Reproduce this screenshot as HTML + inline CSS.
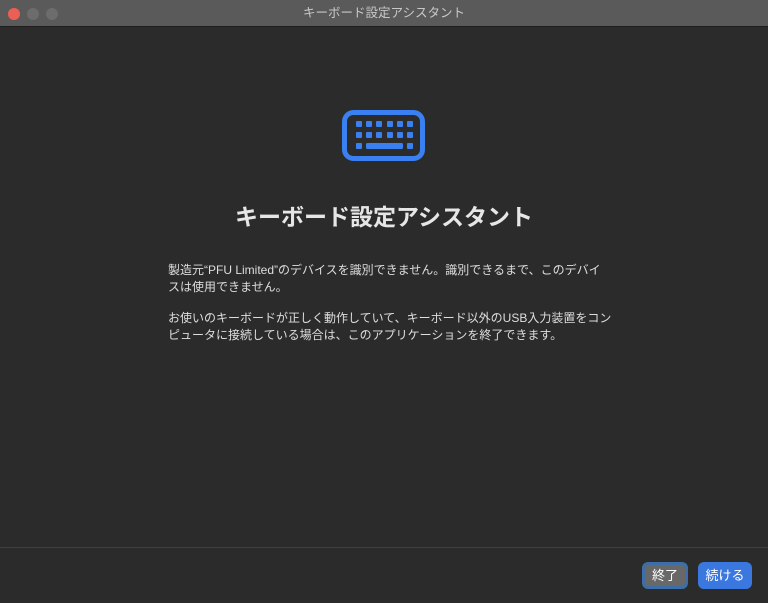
<!DOCTYPE html>
<html><head><meta charset="utf-8"><style>
*{margin:0;padding:0;box-sizing:border-box}
body{width:768px;height:603px;background:#2b2b2b;font-family:"Liberation Sans","Noto Sans CJK JP",sans-serif;overflow:hidden;position:relative;color:#ddd}
.tb{position:absolute;left:0;top:0;width:768px;height:27px;background:#5a5a5a;border-bottom:1px solid #1e1e1e;text-align:center;font-size:12.5px;line-height:26px;color:#c8c8c8}
.d{position:absolute;top:8px;width:12px;height:12px;border-radius:50%;background:#6c6c6c}
h1{position:absolute;top:198px;left:0;width:768px;text-align:center;font-size:23px;font-weight:bold;color:#e6e6e6}
p{position:absolute;left:168px;width:500px;white-space:nowrap;font-size:12px;line-height:17px;color:#dedede}
.sep{position:absolute;left:0;top:547px;width:768px;height:1px;background:#3f3f3f}
.b{position:absolute;top:562px;height:27px;border-radius:6px;font-size:13px;line-height:27px;text-align:center;color:#fff}
</style></head><body>
<div class="tb">キーボード設定アシスタント</div>
<div class="d" style="left:8px;background:#ec5f55"></div>
<div class="d" style="left:27px"></div>
<div class="d" style="left:46px"></div>
<svg style="position:absolute;left:340px;top:108px" width="88" height="55">
<rect x="4.5" y="4.5" width="78" height="46" rx="9" fill="none" stroke="#3a80f0" stroke-width="5"/>
<g fill="#3a80f0">
<rect x="16" y="13" width="6" height="6" rx="1"/><rect x="26" y="13" width="6" height="6" rx="1"/><rect x="36" y="13" width="6" height="6" rx="1"/><rect x="47" y="13" width="6" height="6" rx="1"/><rect x="57" y="13" width="6" height="6" rx="1"/><rect x="67" y="13" width="6" height="6" rx="1"/>
<rect x="16" y="24" width="6" height="6" rx="1"/><rect x="26" y="24" width="6" height="6" rx="1"/><rect x="36" y="24" width="6" height="6" rx="1"/><rect x="47" y="24" width="6" height="6" rx="1"/><rect x="57" y="24" width="6" height="6" rx="1"/><rect x="67" y="24" width="6" height="6" rx="1"/>
<rect x="16" y="35" width="6" height="6" rx="1"/><rect x="26" y="35" width="37" height="6" rx="1.5"/><rect x="67" y="35" width="6" height="6" rx="1"/>
</g></svg>
<h1>キーボード設定アシスタント</h1>
<p style="top:262px">製造元“PFU Limited”のデバイスを識別できません。識別できるまで、このデバイ<br>スは使用できません。</p>
<p style="top:310px">お使いのキーボードが正しく動作していて、キーボード以外のUSB入力装置をコン<br>ピュータに接続している場合は、このアプリケーションを終了できます。</p>
<div class="sep"></div>
<div class="b" style="left:642px;width:46px;background:#686868;border:3px solid #3d6ea8;line-height:21px">終了</div>
<div class="b" style="left:698px;width:54px;background:#3a78e0">続ける</div>
</body></html>
